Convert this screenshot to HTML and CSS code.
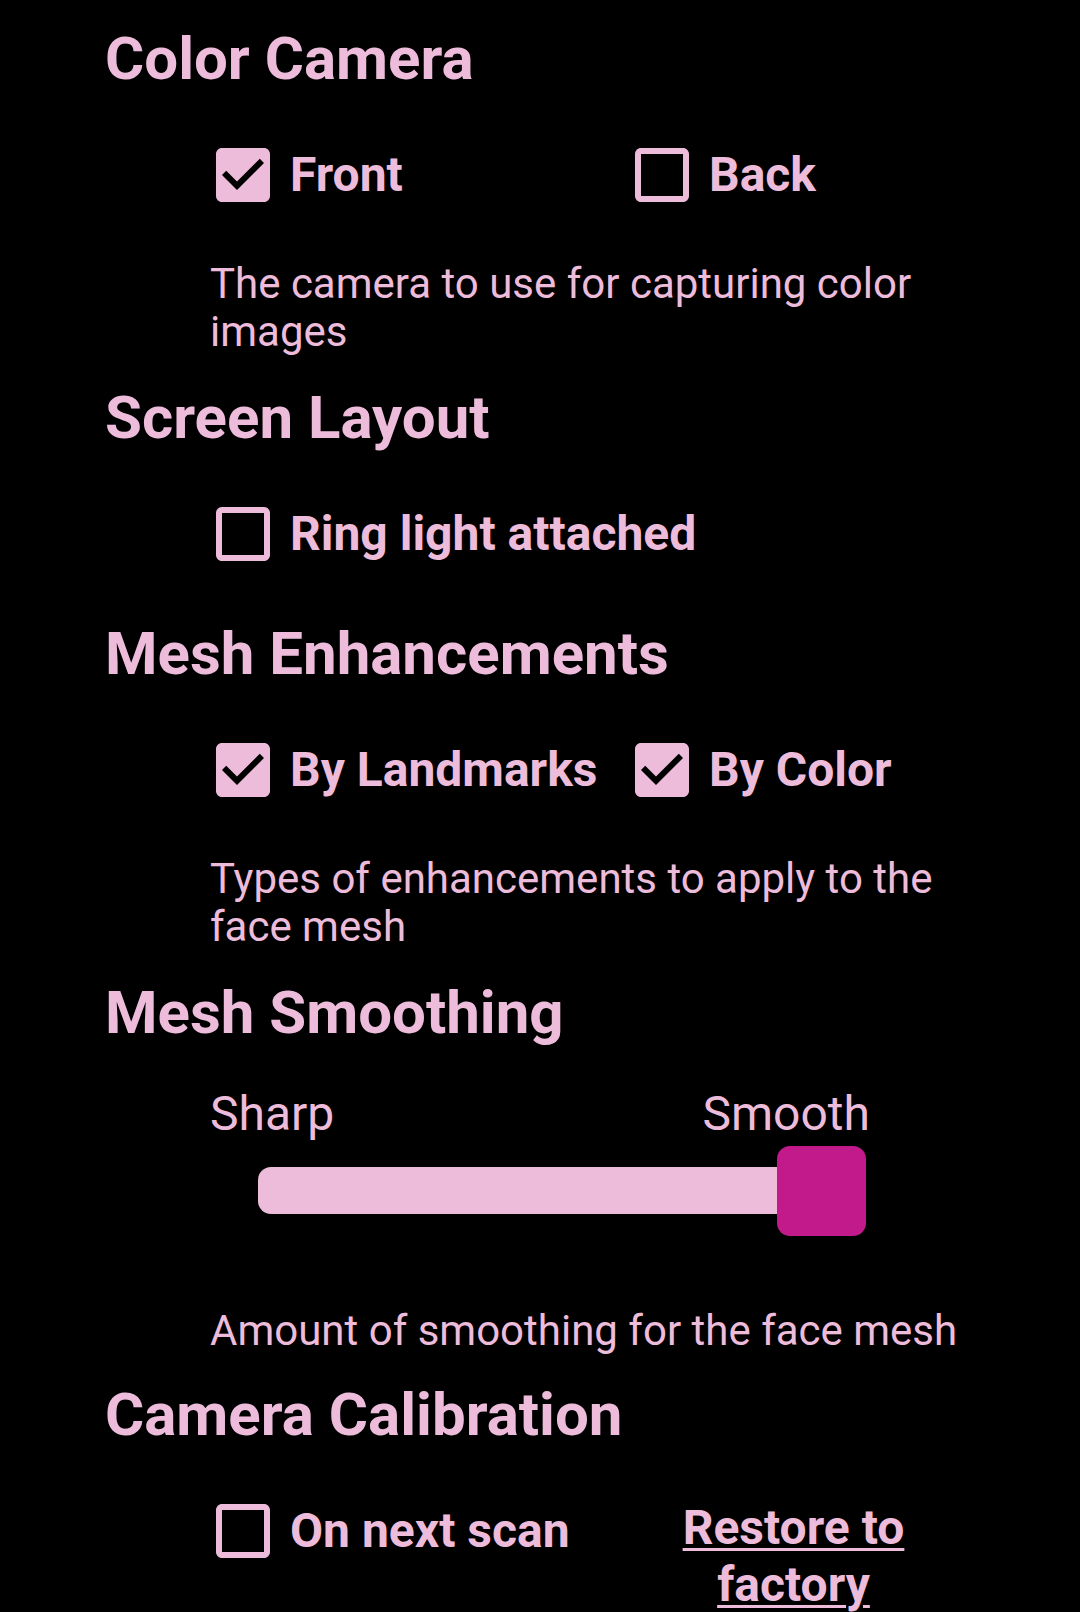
FILE: index.html
```html
<!DOCTYPE html>
<html lang="en">
<head>
<meta charset="utf-8">
<title>Settings</title>
<link rel="stylesheet" href="styles.css">
</head>
<body>
<main class="settings">
  <section class="group">
    <h2 class="group-title">Color Camera</h2>
    <div class="options">
      <label class="option">
        <svg class="cb" viewBox="0 0 24 24"><path d="M19 3H5c-1.11 0-2 .9-2 2v14c0 1.1.89 2 2 2h14c1.11 0 2-.9 2-2V5c0-1.1-.89-2-2-2zm-9 14l-5-5 1.41-1.41L10 14.17l7.59-7.59L19 8l-9 9z"/></svg>
        <span class="option-label">Front</span>
      </label>
      <label class="option">
        <svg class="cb" viewBox="0 0 24 24"><path d="M19 5v14H5V5h14m0-2H5c-1.1 0-2 .9-2 2v14c0 1.1.9 2 2 2h14c1.1 0 2-.9 2-2V5c0-1.1-.9-2-2-2z"/></svg>
        <span class="option-label">Back</span>
      </label>
    </div>
    <p class="desc">The camera to use for capturing color images</p>
  </section>

  <section class="group">
    <h2 class="group-title">Screen Layout</h2>
    <div class="options">
      <label class="option">
        <svg class="cb" viewBox="0 0 24 24"><path d="M19 5v14H5V5h14m0-2H5c-1.1 0-2 .9-2 2v14c0 1.1.9 2 2 2h14c1.1 0 2-.9 2-2V5c0-1.1-.9-2-2-2z"/></svg>
        <span class="option-label">Ring light attached</span>
      </label>
    </div>
  </section>

  <section class="group">
    <h2 class="group-title">Mesh Enhancements</h2>
    <div class="options">
      <label class="option">
        <svg class="cb" viewBox="0 0 24 24"><path d="M19 3H5c-1.11 0-2 .9-2 2v14c0 1.1.89 2 2 2h14c1.11 0 2-.9 2-2V5c0-1.1-.89-2-2-2zm-9 14l-5-5 1.41-1.41L10 14.17l7.59-7.59L19 8l-9 9z"/></svg>
        <span class="option-label">By Landmarks</span>
      </label>
      <label class="option">
        <svg class="cb" viewBox="0 0 24 24"><path d="M19 3H5c-1.11 0-2 .9-2 2v14c0 1.1.89 2 2 2h14c1.11 0 2-.9 2-2V5c0-1.1-.89-2-2-2zm-9 14l-5-5 1.41-1.41L10 14.17l7.59-7.59L19 8l-9 9z"/></svg>
        <span class="option-label">By Color</span>
      </label>
    </div>
    <p class="desc">Types of enhancements to apply to the face mesh</p>
  </section>

  <section class="group group--tight">
    <h2 class="group-title">Mesh Smoothing</h2>
    <div class="slider-block">
      <div class="slider-labels">
        <span>Sharp</span>
        <span>Smooth</span>
      </div>
      <div class="slider">
        <div class="slider-track"></div>
        <div class="slider-thumb"></div>
      </div>
    </div>
    <p class="desc desc--after-slider">Amount of smoothing for the face mesh</p>
  </section>

  <section class="group">
    <h2 class="group-title">Camera Calibration</h2>
    <div class="options">
      <label class="option">
        <svg class="cb" viewBox="0 0 24 24"><path d="M19 5v14H5V5h14m0-2H5c-1.1 0-2 .9-2 2v14c0 1.1.9 2 2 2h14c1.1 0 2-.9 2-2V5c0-1.1-.9-2-2-2z"/></svg>
        <span class="option-label">On next scan</span>
      </label>
      <a class="restore" href="#">Restore to factory</a>
    </div>
  </section>
</main>
</body>
</html>
```

FILE: styles.css
```css
html, body {
  margin: 0;
  background: #000;
}

body {
  color: #ECBCDA;
  font-family: Roboto, "Noto Sans", Arial, sans-serif;
}

.settings {
  padding: 24px 90px 0 105px;
}

.group {
  padding-bottom: 27.5px;
}

.group--tight {
  padding-bottom: 25px;
}

.group-title {
  margin: 0;
  font-size: 60px;
  font-weight: 700;
  line-height: 70px;
}

.options {
  display: grid;
  grid-template-columns: 419px 335px;
  align-items: start;
  margin: 44.5px 0 0 102px;
}

.options:last-child {
  margin-bottom: 22px;
}

.option {
  display: flex;
  align-items: center;
  gap: 11px;
  height: 72px;
  font-size: 48px;
  font-weight: 700;
  line-height: 56px;
  white-space: nowrap;
}

.option-label {
  padding-top: 1px;
}

.cb {
  width: 72px;
  height: 72px;
  flex: none;
  fill: #ECBCDA;
}

.desc {
  margin: 49px 0 0 105px;
  font-size: 42px;
  line-height: 48px;
}

.slider-block {
  margin: 38px 0 0 105px;
  width: 660px;
}

.slider-labels {
  display: flex;
  justify-content: space-between;
  font-size: 48px;
  line-height: 56px;
}

.slider {
  position: relative;
  display: flex;
  align-items: center;
  height: 90px;
  margin: 3.5px 0 0 48px;
  width: 608px;
}

.slider-track {
  flex: 1;
  height: 47px;
  margin-right: 30px;
  border-radius: 13px;
  background: #ECBCDA;
}

.slider-thumb {
  position: absolute;
  top: 0;
  right: 0;
  width: 89px;
  height: 90px;
  border-radius: 13px;
  background: #C2198B;
}

.desc--after-slider {
  margin-top: 71.5px;
}

.restore {
  margin-top: 4px;
  color: #ECBCDA;
  font-size: 48px;
  font-weight: 700;
  line-height: 57px;
  text-align: center;
  text-decoration: underline;
  text-decoration-thickness: 3px;
  text-underline-offset: 4px;
}
```
